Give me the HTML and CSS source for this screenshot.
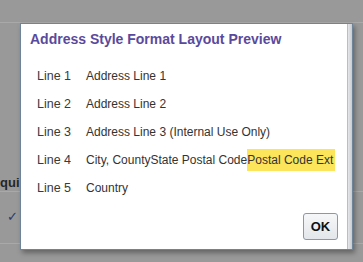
FILE: index.html
```html
<!DOCTYPE html>
<html lang="en">

<head>
    <meta charset="UTF-8">
    <title>Address Style Format Layout Preview</title>
    <link rel="stylesheet" href="styles.css">
</head>

<body>
    <!-- Page behind the modal (dimmed) -->
    <div class="page">
        <div class="page-row top-row"></div>
        <div class="page-row head-row">
            <span class="col-head">qui</span>
        </div>
        <div class="page-row data-row">
            <span class="check">&#10003;</span>
        </div>
    </div>

    <!-- Modal -->
    <div class="dialog">
        <div class="dialog-body">
            <div class="dialog-title">Address Style Format Layout Preview</div>
            <div class="layout-grid">
                <div class="line-label">Line 1</div>
                <div class="line-value">Address Line 1</div>
                <div class="line-label">Line 2</div>
                <div class="line-value">Address Line 2</div>
                <div class="line-label">Line 3</div>
                <div class="line-value">Address Line 3 (Internal Use Only)</div>
                <div class="line-label">Line 4</div>
                <div class="line-value">City, CountyState Postal Code<span class="highlight">Postal Code Ext</span></div>
                <div class="line-label">Line 5</div>
                <div class="line-value">Country</div>
            </div>
            <div class="button-bar">
                <button class="ok-button">OK</button>
            </div>
        </div>
        <div class="dialog-edge"></div>
    </div>
</body>

</html>
```

FILE: styles.css
```css
html,
body {
    height: 100%;
    margin: 0;
    font-family: "Liberation Sans", Arial, sans-serif;
}

body {
    background: #999999;
    overflow: hidden;
}

.page {
    display: flex;
    flex-direction: column;
}

.page-row {
    border-bottom: 1px solid #a9a9a9;
    box-sizing: border-box;
    display: flex;
    align-items: flex-end;
}

.top-row {
    height: 23px;
}

.head-row {
    height: 169px;
    padding-bottom: 1px;
}

.col-head {
    font-size: 13px;
    font-weight: bold;
    color: #262626;
}

.data-row {
    height: 52px;
    align-items: flex-start;
    padding-top: 17px;
    padding-left: 7px;
}

.check {
    font-size: 13px;
    color: #2c3868;
}

.dialog {
    position: absolute;
    left: 20px;
    top: 23px;
    width: 333px;
    height: 227px;
    display: flex;
    border: 1px solid #6f8499;
    box-sizing: border-box;
    box-shadow: 2px 3px 5px rgba(0, 0, 0, 0.35);
    background: white;
}

.dialog-body {
    flex: 1;
    min-width: 0;
    display: flex;
    flex-direction: column;
    padding: 7px 9px 9px 9px;
}

.dialog-edge {
    width: 4px;
    background: linear-gradient(90deg, #e4e6e9, #c9ccd0);
    border-left: 1px solid #b9bec4;
}

.dialog-title {
    font-size: 14px;
    font-weight: bold;
    color: #5a4a9c;
    line-height: 16px;
}

.layout-grid {
    display: grid;
    grid-template-columns: 49px auto;
    grid-auto-rows: 28px;
    align-items: center;
    margin-top: 15px;
    margin-left: 7px;
    font-size: 12px;
    color: #333333;
    white-space: nowrap;
}

.line-label {
    font-size: 12.5px;
    color: #3a3a3a;
}

.highlight {
    background: #fce55a;
    display: inline-block;
    line-height: 22px;
    padding-right: 2px;
}

.button-bar {
    margin-top: auto;
    display: flex;
    justify-content: flex-end;
}

.ok-button {
    width: 35px;
    height: 27px;
    padding: 0;
    font-family: "Liberation Sans", Arial, sans-serif;
    font-size: 13px;
    font-weight: bold;
    color: #111111;
    background: linear-gradient(#f6f7f8, #e3e6ea);
    border: 1px solid #8d98a4;
    border-radius: 3px;
}
```
